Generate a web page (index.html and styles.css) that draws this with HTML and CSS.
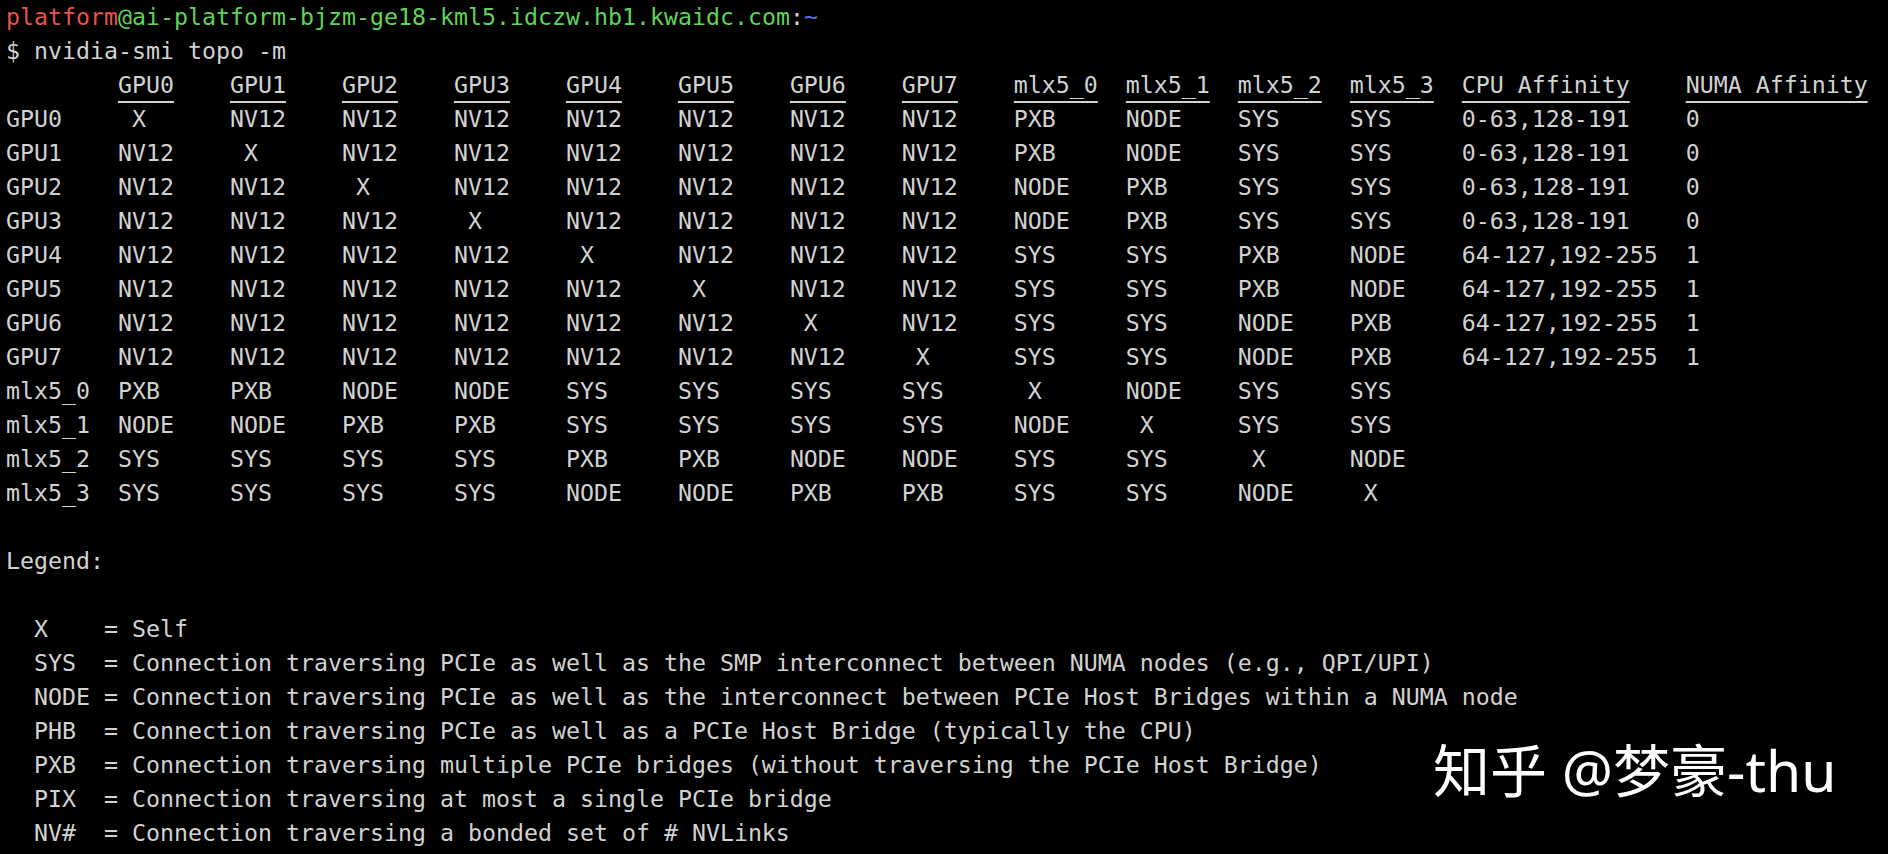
FILE: index.html
```html
<!DOCTYPE html>
<html>
<head>
<meta charset="utf-8">
<link rel="stylesheet" href="styles.css">
</head>
<body>
<div class="terminal">
<pre class="out"><span class="user">platform</span><span class="host">@ai-platform-bjzm-ge18-kml5.idczw.hb1.kwaidc.com</span>:<span class="path">~</span>
$ nvidia-smi topo -m
	<span class="hdr">GPU0	GPU1	GPU2	GPU3	GPU4	GPU5	GPU6	GPU7	mlx5_0	mlx5_1	mlx5_2	mlx5_3	CPU Affinity	NUMA Affinity</span>
GPU0	 X 	NV12	NV12	NV12	NV12	NV12	NV12	NV12	PXB	NODE	SYS	SYS	0-63,128-191	0
GPU1	NV12	 X 	NV12	NV12	NV12	NV12	NV12	NV12	PXB	NODE	SYS	SYS	0-63,128-191	0
GPU2	NV12	NV12	 X 	NV12	NV12	NV12	NV12	NV12	NODE	PXB	SYS	SYS	0-63,128-191	0
GPU3	NV12	NV12	NV12	 X 	NV12	NV12	NV12	NV12	NODE	PXB	SYS	SYS	0-63,128-191	0
GPU4	NV12	NV12	NV12	NV12	 X 	NV12	NV12	NV12	SYS	SYS	PXB	NODE	64-127,192-255	1
GPU5	NV12	NV12	NV12	NV12	NV12	 X 	NV12	NV12	SYS	SYS	PXB	NODE	64-127,192-255	1
GPU6	NV12	NV12	NV12	NV12	NV12	NV12	 X 	NV12	SYS	SYS	NODE	PXB	64-127,192-255	1
GPU7	NV12	NV12	NV12	NV12	NV12	NV12	NV12	 X 	SYS	SYS	NODE	PXB	64-127,192-255	1
mlx5_0	PXB	PXB	NODE	NODE	SYS	SYS	SYS	SYS	 X 	NODE	SYS	SYS
mlx5_1	NODE	NODE	PXB	PXB	SYS	SYS	SYS	SYS	NODE	 X 	SYS	SYS
mlx5_2	SYS	SYS	SYS	SYS	PXB	PXB	NODE	NODE	SYS	SYS	 X 	NODE
mlx5_3	SYS	SYS	SYS	SYS	NODE	NODE	PXB	PXB	SYS	SYS	NODE	 X 

Legend:

  X    = Self
  SYS  = Connection traversing PCIe as well as the SMP interconnect between NUMA nodes (e.g., QPI/UPI)
  NODE = Connection traversing PCIe as well as the interconnect between PCIe Host Bridges within a NUMA node
  PHB  = Connection traversing PCIe as well as a PCIe Host Bridge (typically the CPU)
  PXB  = Connection traversing multiple PCIe bridges (without traversing the PCIe Host Bridge)
  PIX  = Connection traversing at most a single PCIe bridge
  NV#  = Connection traversing a bonded set of # NVLinks</pre>
<div class="watermark">知乎 @梦豪-thu</div>
</div>
</body>
</html>
```
FILE: styles.css
```css
html, body {
  margin: 0;
  padding: 0;
  background: #000;
}
body {
  width: 1888px;
  height: 854px;
  overflow: hidden;
}
.terminal {
  position: relative;
  width: 1888px;
  height: 854px;
  background: #000;
}
.out {
  margin: 0;
  padding: 0 0 0 6px;
  font-family: "DejaVu Sans Mono", monospace;
  font-size: 23.25px;
  line-height: 34px;
  color: #d2d2d2;
  tab-size: 8;
  white-space: pre;
}
.user { color: #e8534b; }
.host { color: #5fd35a; }
.path { color: #5b6fe6; }
.hdr {
  text-decoration: underline;
  text-decoration-thickness: 2px;
  text-underline-offset: 8px;
  text-decoration-color: #d2d2d2;
  text-decoration-skip-ink: none;
}
.watermark {
  position: absolute;
  left: 1433px;
  top: 732px;
  font-family: "Noto Sans", "Noto Sans CJK SC", sans-serif;
  font-size: 57px;
  line-height: 76px;
  color: #fff;
  white-space: nowrap;
}
```
